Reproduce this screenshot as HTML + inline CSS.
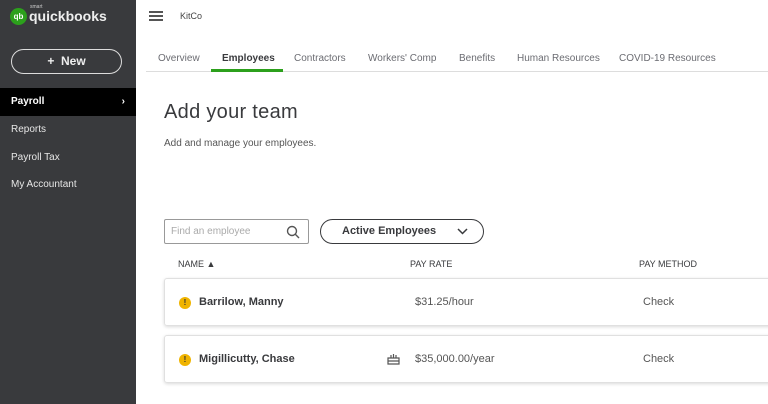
<!DOCTYPE html>
<html><head><style>
*{margin:0;padding:0;box-sizing:border-box}
body{width:768px;height:404px;overflow:hidden;font-family:"Liberation Sans",sans-serif;background:#fff;position:relative}
.side{position:absolute;left:0;top:0;width:136px;height:404px;background:#393a3d;color:#e6e6e6}
.abs{position:absolute}
.logo{left:10px;top:8px;width:17px;height:17px;border-radius:50%;background:#2ca01c;color:#fff;font-size:8px;font-weight:bold;text-align:center;line-height:17px}
.new{left:11px;top:49px;width:111px;height:25px;border:1.5px solid #ddd;border-radius:13px;color:#eee;font-size:12px;font-weight:bold;text-align:center;line-height:22px}
.nav{left:0;width:136px;height:28px;font-size:10px;padding-left:11px;line-height:28px}
.tab{top:53px;font-size:10px;color:#6b6c72}
.card{position:absolute;left:164px;width:610px;height:48px;border:1px solid #e0e0e0;border-radius:3px;box-shadow:0 1px 3px rgba(0,0,0,.15);font-size:11px}
.warn{position:absolute;left:14px;top:18px;width:12px;height:12px;border-radius:50%;background:#f0b400;color:#333;font-size:8px;font-weight:bold;text-align:center;line-height:12px}
</style></head><body>
<div class="side">
<div class="abs logo">qb</div>
<div class="abs" style="left:30px;top:4px;font-size:5px;color:#ccc">smart</div>
<div class="abs" style="left:29px;top:8px;font-size:14px;font-weight:bold;color:#eee">quickbooks</div>
<div class="abs new">+&nbsp; New</div>
<div class="abs nav" style="top:88px;background:#000;color:#fff;font-weight:bold">Payroll<span style="position:absolute;right:11px">›</span></div>
<div class="abs nav" style="top:116px">Reports</div>
<div class="abs nav" style="top:144px">Payroll Tax</div>
<div class="abs nav" style="top:171px">My Accountant</div>
</div>
<div class="abs" style="left:149px;top:11px;width:14px;height:2px;background:#555;box-shadow:0 4px 0 #555,0 8px 0 #555"></div>
<div class="abs" style="left:180px;top:11px;font-size:9px;color:#444">KitCo</div>
<div class="abs" style="left:146px;top:71px;width:622px;height:1px;background:#ddd"></div>
<div class="abs tab" style="left:158px">Overview</div>
<div class="abs tab" style="left:222px;color:#393a3d;font-weight:bold">Employees</div>
<div class="abs" style="left:211px;top:69px;width:72px;height:3px;background:#2ca01c"></div>
<div class="abs tab" style="left:294px">Contractors</div>
<div class="abs tab" style="left:368px">Workers' Comp</div>
<div class="abs tab" style="left:459px">Benefits</div>
<div class="abs tab" style="left:517px">Human Resources</div>
<div class="abs tab" style="left:619px">COVID-19 Resources</div>
<div class="abs" style="left:164px;top:101px;font-size:20px;color:#393a3d;letter-spacing:0.3px">Add your team</div>
<div class="abs" style="left:164px;top:138px;font-size:10px;color:#555">Add and manage your employees.</div>
<div class="abs" style="left:164px;top:219px;width:145px;height:25px;border:1px solid #999;border-radius:2px;font-size:10px;color:#aaa;padding:6px 6px">Find an employee
<svg class="abs" style="right:8px;top:5px" width="14" height="14" viewBox="0 0 14 14"><circle cx="6" cy="6" r="4.5" fill="none" stroke="#555" stroke-width="1.4"/><path d="M9.3 9.3L13 13" stroke="#555" stroke-width="1.4"/></svg></div>
<div class="abs" style="left:320px;top:219px;width:164px;height:25px;border:1.5px solid #393a3d;border-radius:13px;font-size:11px;font-weight:bold;color:#393a3d;padding:5px 0 0 21px">Active Employees
<svg class="abs" style="left:136px;top:8px" width="11" height="7" viewBox="0 0 11 7"><path d="M1 1l4.5 4.5L10 1" fill="none" stroke="#393a3d" stroke-width="1.5"/></svg></div>
<div class="abs" style="left:178px;top:259px;font-size:9px;color:#393a3d">NAME ▲</div>
<div class="abs" style="left:410px;top:259px;font-size:9px;color:#393a3d">PAY RATE</div>
<div class="abs" style="left:639px;top:259px;font-size:9px;color:#393a3d">PAY METHOD</div>
<div class="card" style="top:278px"><div class="warn">!</div><span class="abs" style="left:34px;top:17px;font-weight:bold;color:#393a3d">Barrilow, Manny</span><span class="abs" style="left:250px;top:17px;color:#555">$31.25/hour</span><span class="abs" style="left:478px;top:17px;color:#555">Check</span></div>
<div class="card" style="top:335px"><div class="warn">!</div><span class="abs" style="left:34px;top:17px;font-weight:bold;color:#393a3d">Migillicutty, Chase</span>
<svg class="abs" style="left:221px;top:15px" width="15" height="15" viewBox="0 0 15 15"><path d="M2 7h11v6H2zM2 10h11M5 7V4M7.5 7V3M10 7V4" fill="none" stroke="#555" stroke-width="1.2"/></svg>
<span class="abs" style="left:250px;top:17px;color:#555">$35,000.00/year</span><span class="abs" style="left:478px;top:17px;color:#555">Check</span></div>
</body></html>
